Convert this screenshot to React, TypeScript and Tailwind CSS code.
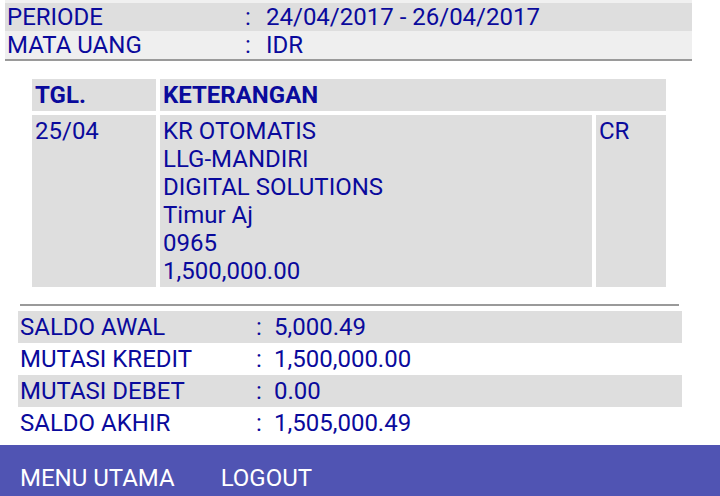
const rows = [
  { label: 'SALDO AWAL', value: '5,000.49', shade: true },
  { label: 'MUTASI KREDIT', value: '1,500,000.00', shade: false },
  { label: 'MUTASI DEBET', value: '0.00', shade: true },
  { label: 'SALDO AKHIR', value: '1,505,000.49', shade: false },
];

const detail = ['KR OTOMATIS', 'LLG-MANDIRI', 'DIGITAL SOLUTIONS', 'Timur Aj', '0965', '1,500,000.00'];

export default function App() {
  return (
    <div className="w-[720px] h-[496px] overflow-hidden bg-white text-[24px] leading-[28px] text-[#0a0a9c] font-['Roboto',sans-serif] flex flex-col">
      {/* Header info */}
      <div className="ml-[5px] w-[687px] pt-[3px] bg-[#f0f0f0] border-b-2 border-[#9a9a9a]">
        <div className="grid grid-cols-[238px_21px_1fr] h-[28px] bg-[#dedede] pl-[2px]">
          <span>PERIODE</span>
          <span>:</span>
          <span>24/04/2017 - 26/04/2017</span>
        </div>
        <div className="grid grid-cols-[238px_21px_1fr] h-[28px] bg-[#efefef] pl-[2px]">
          <span>MATA UANG</span>
          <span>:</span>
          <span>IDR</span>
        </div>
      </div>

      {/* Transactions */}
      <div className="ml-[32px] mt-[18px] w-[634px] grid grid-cols-[124px_432px_70px] gap-[4px]">
        <div className="h-[32px] bg-[#dedede] px-[3px] flex items-center font-bold">TGL.</div>
        <div className="col-span-2 h-[32px] bg-[#dedede] px-[3px] flex items-center font-bold">KETERANGAN</div>
        <div className="h-[172px] bg-[#dedede] px-[3px] pt-[2px]">25/04</div>
        <div className="h-[172px] bg-[#dedede] px-[3px] pt-[2px]">
          {detail.map((line) => (
            <div key={line}>{line}</div>
          ))}
        </div>
        <div className="h-[172px] bg-[#dedede] px-[3px] pt-[2px]">CR</div>
      </div>

      {/* Summary */}
      <div className="ml-[20px] mt-[17px] w-[659px] h-[2px] bg-[#9a9a9a]" />
      <div className="ml-[18px] mt-[5px] w-[664px]">
        {rows.map((r) => (
          <div
            key={r.label}
            className={`grid grid-cols-[236px_18px_1fr] h-[32px] items-center pl-[2px] ${r.shade ? 'bg-[#dedede]' : ''}`}
          >
            <span>{r.label}</span>
            <span>:</span>
            <span>{r.value}</span>
          </div>
        ))}
      </div>

      {/* Footer */}
      <div className="mt-[6px] flex-1 bg-[#5054b3] text-white pt-[19px] pl-[20px] flex gap-[46px]">
        <span>MENU UTAMA</span>
        <span>LOGOUT</span>
      </div>
    </div>
  );
}
